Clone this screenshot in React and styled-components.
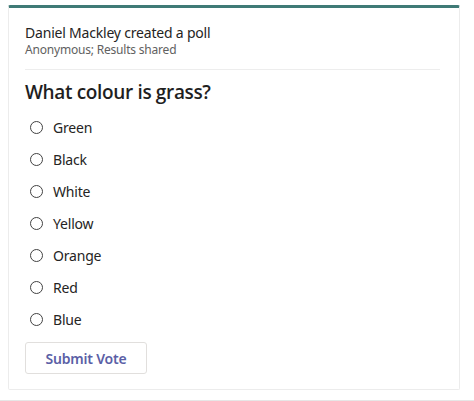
import React, { useState } from 'react';
import styled, { createGlobalStyle } from 'styled-components';

const GlobalStyle = createGlobalStyle`
    html, body {
        margin: 0;
        padding: 0;
        background: #ffffff;
    }
    body {
        font-family: "Noto Sans", "Open Sans", "Liberation Sans", sans-serif;
        color: #252423;
    }
`;

const Page = styled.div`
    width: 474px;
    height: 401px;
    box-sizing: border-box;
    padding: 5px 12px 0 8px;
    border-bottom: 1px solid #e6e6e6;
    background: #ffffff;
`;

const Card = styled.form`
    box-sizing: border-box;
    width: 452px;
    height: 385px;
    border: 1px solid #ececec;
    border-top: 3px solid #3f7a76;
    border-radius: 2px;
    padding: 16px 16px 0 16px;
    background: #ffffff;
`;

const Header = styled.header`
    display: grid;
    padding-bottom: 11px;
    border-bottom: 1px solid #ededed;
    margin-right: 3px;
`;

const Creator = styled.div`
    font-size: 14px;
    line-height: 18px;
    color: #252423;
    letter-spacing: -0.2px;
`;

const Meta = styled.div`
    font-size: 12px;
    line-height: 16px;
    color: #616161;
    letter-spacing: -0.2px;
`;

const Question = styled.h1`
    margin: 9px 0 6px 0;
    font-family: "Open Sans", "Noto Sans", sans-serif;
    font-size: 19px;
    line-height: 26px;
    font-weight: 600;
    color: #1f1f1f;
    letter-spacing: -0.35px;
`;

const Options = styled.div`
    display: grid;
`;

const Option = styled.label`
    display: flex;
    align-items: center;
    gap: 10px;
    height: 32px;
    padding-left: 5px;
    font-size: 14px;
    color: #252423;
    cursor: pointer;
    letter-spacing: -0.2px;
`;

const Radio = styled.span`
    box-sizing: border-box;
    width: 13px;
    height: 13px;
    border-radius: 50%;
    border: 1px solid ${p => (p.checked ? '#6264a7' : '#424242')};
    display: flex;
    align-items: center;
    justify-content: center;

    &::after {
        content: '';
        width: 7px;
        height: 7px;
        border-radius: 50%;
        background: ${p => (p.checked ? '#6264a7' : 'transparent')};
    }
`;

const SubmitButton = styled.button`
    margin-top: 7px;
    width: 122px;
    height: 32px;
    box-sizing: border-box;
    border: 1px solid #e1dfdd;
    border-radius: 3px;
    background: #ffffff;
    color: #5b5fa6;
    font-family: inherit;
    font-size: 14px;
    font-weight: 600;
    letter-spacing: -0.2px;
    cursor: pointer;
`;

const choices = ['Green', 'Black', 'White', 'Yellow', 'Orange', 'Red', 'Blue'];

function App() {
    const [selected, setSelected] = useState(null);

    return (
        <>
            <GlobalStyle />
            <Page>
                <Card onSubmit={e => e.preventDefault()}>
                    <Header>
                        <Creator>Daniel Mackley created a poll</Creator>
                        <Meta>Anonymous; Results shared</Meta>
                    </Header>
                    <Question>What colour is grass?</Question>
                    <Options>
                        {choices.map(choice => (
                            <Option key={choice} onClick={() => setSelected(choice)}>
                                <Radio checked={selected === choice} />
                                {choice}
                            </Option>
                        ))}
                    </Options>
                    <SubmitButton type="submit">Submit Vote</SubmitButton>
                </Card>
            </Page>
        </>
    );
}

export default App;
